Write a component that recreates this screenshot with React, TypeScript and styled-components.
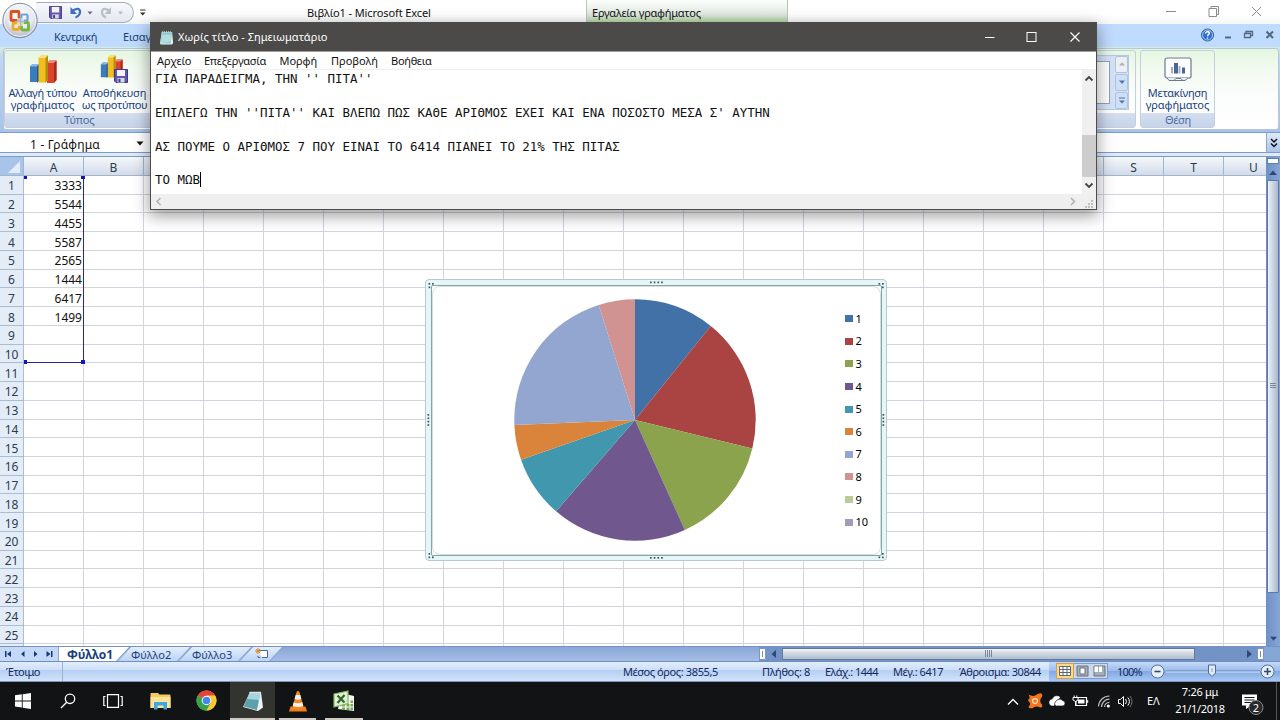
import React from 'react';
import styled, { createGlobalStyle } from 'styled-components';

const Global = createGlobalStyle`
  * { box-sizing: border-box; }
  body { margin: 0; overflow: hidden; }
`;

const ui = '"Noto Sans", "Open Sans", sans-serif';
const navy = '#1b3f7d';

const Desktop = styled.div`
  position: relative;
  width: 1280px;
  height: 720px;
  display: flex;
  flex-direction: column;
  overflow: hidden;
  background: #fff;
  font: 11px/14px ${ui};
  color: #111;
  white-space: nowrap;
`;
const Label = styled.span<{ $ls?: number }>`
  letter-spacing: ${(p) => p.$ls ?? 0}px;
`;

/* ---------- Excel title bar ---------- */
const TitleBar = styled.header`
  display: flex;
  height: 24px;
  background: linear-gradient(#fff 60%, #f6f7f8);
`;
const QuickAccess = styled.div`
  width: 98px;
  height: 21px;
  margin: 2px 0 0 36px;
  padding-left: 12px;
  display: flex;
  align-items: center;
  border: 1px solid #a5acbb;
  border-left-color: transparent;
  border-radius: 0 11px 11px 0;
  background: linear-gradient(#f6f8fb, #e4e8f0);
`;
const MoreCommands = styled.div`
  width: 173px;
  padding: 6px 0 0 6px;
`;
const DocTitle = styled.div`
  width: 279px;
  padding-top: 6px;
`;
const ContextTitle = styled.div`
  width: 202px;
  padding: 6px 0 0 5px;
  border: solid #b9c5bb;
  border-width: 0 1px;
  background: linear-gradient(#fdfefd, #dfe8e0 60%, #a9d293);
`;
const WindowButtons = styled.div`
  margin-left: auto;
  width: 118px;
  padding: 5px 0 0 4px;
`;

/* ---------- Ribbon ---------- */
const TabStrip = styled.nav`
  display: flex;
  height: 23px;
  padding: 6px 5px 0 54px;
  background: #bfdbff;
  color: ${navy};
`;
const RibbonTab = styled.span<{ $ls?: number }>`
  width: 69px;
  letter-spacing: ${(p) => p.$ls ?? 0}px;
`;
const TabTools = styled.div`
  margin: -2px 0 0 auto;
`;
const Ribbon = styled.section`
  display: flex;
  height: 86px;
  padding: 1px 1px 2px 3px;
  background: linear-gradient(#d8edda, #bfd6f6 12%, #a9c3e8);
`;
const RibbonInner = styled.div`
  flex: 1;
  display: flex;
  justify-content: space-between;
  padding: 0 63px 0 0;
  border: 1px solid #b4c8d8;
  border-radius: 3px;
  background: linear-gradient(#e4f6df, #f2faf0 25%, #fbfdfc 60%, #fff);
`;
const Group = styled.div<{ $w: number }>`
  width: ${(p) => p.$w}px;
  margin: 1px 0 1px;
  display: flex;
  flex-direction: column;
  border: 1px solid #c3cfdd;
  border-radius: 3px;
  overflow: hidden;
`;
const RightGroups = styled.div`
  display: flex;
  gap: 4px;
`;
const GroupBody = styled.div`
  flex: 1;
  display: flex;
  justify-content: flex-start;
`;
const GroupName = styled.div<{ $pad?: number }>`
  height: 14px;
  line-height: 14px;
  padding-left: ${(p) => p.$pad ?? 0}px;
  background: linear-gradient(#d5dff0, #c6d3ea);
  color: #4a6a9f;
`;
const BigButton = styled.button<{ $w: number }>`
  width: ${(p) => p.$w}px;
  padding: 4px 0 0;
  border: 0;
  background: none;
  display: flex;
  flex-direction: column;
  align-items: center;
  font: 11px/12.4px ${ui};
  color: ${navy};
  white-space: nowrap;
`;
const BigIcon = styled.span<{ $dx?: number }>`
  height: 32px;
  display: block;
  margin-right: ${(p) => p.$dx ?? 0}px;
`;
const Gallery = styled.div`
  flex: 1;
  margin: 4px 6px 3px 0;
  display: flex;
  justify-content: flex-end;
  background: #d3e2f5;
  border: 1px solid #b5c8e2;
`;
const GalleryThumb = styled.div`
  flex: 1;
  margin: 5px 5px 5px 0;
  background: #fff;
  border: 1px solid #8fa2bc;
`;
const GalleryArrows = styled.div`
  width: 13px;
  display: flex;
  flex-direction: column;
  gap: 1px;
`;
const GalleryArrow = styled.span<{ $dim?: boolean }>`
  flex: 1;
  display: flex;
  align-items: center;
  justify-content: center;
  border: 1px solid #adc4e2;
  border-radius: 2px;
  background: ${(p) => (p.$dim ? '#eceff4' : '#cfe0f6')};
`;

/* ---------- Formula bar ---------- */
const FormulaBar = styled.div`
  display: flex;
  height: 21px;
  border: solid #7d9cc6;
  border-width: 1px 0;
  background: #fff;
`;
const NameBox = styled.div`
  flex: 1;
  display: flex;
  padding: 4px 0 0 30px;
`;
const NameText = styled.span`
  width: 105px;
  font-size: 12px;
  line-height: 15px;
  letter-spacing: 0.2px;
`;
const Expand = styled.div`
  width: 14px;
  display: flex;
  align-items: center;
  justify-content: center;
  border-left: 1px solid #8ba7d0;
  background: linear-gradient(#dfeafa, #a9c4ea);
`;
const BarGap = styled.div`
  height: 4px;
  background: #dfeaf8;
  border-bottom: 1px solid #7f9bc2;
`;

/* ---------- Sheet ---------- */
const SheetArea = styled.main`
  position: relative;
  height: 489px;
  display: flex;
`;
const Grid = styled.div`
  width: 1266px;
  overflow: hidden;
`;
const GridRow = styled.div<{ $head?: boolean }>`
  display: flex;
  height: ${(p) => (p.$head ? 19 : 18.74)}px;
  width: 1284px;
`;
const Corner = styled.div`
  width: 24px;
  border: solid #9eb6ce;
  border-width: 0 1px 1px 0;
  background: #a9c4e9;
  display: flex;
  align-items: flex-end;
  justify-content: flex-end;
  padding: 2px;
`;
const ColHead = styled.div`
  width: 60px;
  padding-top: 4px;
  text-align: center;
  font-size: 12px;
  color: #2b3c50;
  border: solid #9eb6ce;
  border-width: 0 1px 1px 0;
  background: linear-gradient(#f5f8fb, #e4eaf3 50%, #d3dbe9);
`;
const RowHead = styled.div`
  width: 24px;
  padding-top: 3.4px;
  text-align: center;
  font-size: 12px;
  color: #2b3c50;
  border: solid #a9bdd3;
  border-width: 0 1px 1px 0;
  background: #e4ecf7;
`;
const Cell = styled.div`
  width: 60px;
  padding: 3.4px 1px 0 0;
  text-align: right;
  font-size: 12px;
  border: solid #d0d5df;
  border-width: 0 1px 1px 0;
`;
const RangeBox = styled.div`
  position: absolute;
  left: 25px;
  top: 20px;
  width: 59px;
  height: 186px;
  border: solid #2a23a4;
  border-width: 0 1px 1px 0;
`;
const Handle = styled.i<{ $r?: boolean; $b?: boolean }>`
  position: absolute;
  width: ${(p) => (p.$r ? 4 : 3)}px;
  height: ${(p) => (p.$b ? 4 : 3)}px;
  background: #1313c4;
  ${(p) => (p.$r ? 'right: -2px;' : 'left: -1px;')}
  ${(p) => (p.$b ? 'bottom: -2px;' : 'top: -1px;')}
`;
const VScroll = styled.div`
  width: 14px;
  display: flex;
  flex-direction: column;
  align-items: center;
  background: linear-gradient(90deg, #6d90c4, #86a6d6);
`;
const VSplit = styled.div`
  width: 12px;
  height: 6px;
  margin-top: 1px;
  border: 1px solid #5f7fae;
  background: #fff;
`;
const VThumb = styled.div`
  width: 12px;
  height: 413px;
  display: flex;
  align-items: center;
  justify-content: center;
  border: 1px solid #5f7aa6;
  border-radius: 1px;
  background: linear-gradient(90deg, #eef2f8, #cdd6e3 45%, #aab8cd);
`;
const ArrowBox = styled.div<{ $h: number }>`
  height: ${(p) => p.$h}px;
  display: flex;
  align-items: flex-end;
  padding-bottom: 3px;
`;

/* ---------- Chart ---------- */
const ChartFrame = styled.div`
  position: absolute;
  left: 425px;
  top: 122px;
  width: 462px;
  height: 282px;
  padding: 5px;
  border: 1px solid #b3cbd1;
  border-radius: 4px;
  background: #e6f6f8;
`;
const ChartArea = styled.div`
  width: 451px;
  height: 271px;
  display: flex;
  border: 1px solid #86a5a8;
  background: #fff;
  border-radius: 2px;
`;
const ChartInner = styled.div`
  flex: 1;
  display: flex;
  padding: 12px 0 0 81.3px;
  border: 1px solid #d4dede;
  border-radius: 8px;
`;
const Legend = styled.ul`
  margin: 8.5px 0 0 88.7px;
  padding: 0;
  list-style: none;
`;
const LegendItem = styled.li<{ $c: string }>`
  display: flex;
  align-items: center;
  gap: 2.5px;
  height: 22.6px;
  color: #000;
  &::before {
    content: '';
    width: 8px;
    height: 7px;
    background: ${(p) => p.$c};
  }
`;
const GripLayer = styled.svg`
  position: absolute;
  left: 0;
  top: 0;
`;

/* ---------- Sheet tabs ---------- */
const SheetBar = styled.div`
  display: flex;
  height: 16px;
  border-top: 1px solid #7692c4;
  border-bottom: 1px solid #6f8fc4;
  background: linear-gradient(#8aa7d6, #a5bee6);
`;
const NavButtons = styled.div`
  width: 59px;
  height: 14px;
  display: flex;
  align-items: center;
  padding-left: 4px;
  background: #c3d9f7;
  border-right: 1px solid #8aa5d0;
`;
const TabOuter = styled.div<{ $w: number; $on?: boolean }>`
  width: ${(p) => p.$w}px;
  margin-left: ${(p) => (p.$on ? 0 : -12)}px;
  display: flex;
  background: #7f9fd0;
  clip-path: ${(p) =>
    p.$on
      ? 'polygon(0 0, 100% 0, calc(100% - 13px) 100%, 0 100%)'
      : 'polygon(13px 0, 100% 0, calc(100% - 13px) 100%, 0 100%)'};
`;
const TabInner = styled.div<{ $pad: number; $on?: boolean }>`
  flex: 1;
  padding-left: ${(p) => p.$pad}px;
  font-size: ${(p) => (p.$on ? 12 : 11)}px;
  font-weight: ${(p) => (p.$on ? 700 : 400)};
  letter-spacing: ${(p) => (p.$on ? 0 : 0.1)}px;
  line-height: 15px;
  color: ${navy};
  background: ${(p) => (p.$on ? '#fff' : 'linear-gradient(#e3eefc, #bdd4f5)')};
  clip-path: ${(p) =>
    p.$on
      ? 'polygon(0 0, calc(100% - 1px) 0, calc(100% - 14px) 100%, 0 100%)'
      : 'polygon(13px 0, calc(100% - 1px) 0, calc(100% - 14px) 100%, 0 100%)'};
`;
const HScroll = styled.div`
  margin-left: auto;
  width: 505px;
  display: flex;
  align-items: center;
  background: #7393c6;
`;
const HSplit = styled.div`
  width: 7px;
  height: 12px;
  border: 1px solid #7a97c6;
  background: #fff;
  display: flex;
  justify-content: center;
  &::before {
    content: '';
    width: 1px;
    margin: 2px 0;
    background: #7a8cab;
  }
`;
const HArrow = styled.div<{ $w: number }>`
  width: ${(p) => p.$w}px;
  display: flex;
  align-items: center;
  justify-content: center;
`;
const HThumb = styled.div`
  width: 413px;
  height: 12px;
  display: flex;
  align-items: center;
  justify-content: center;
  border: 1px solid #6078a2;
  background: linear-gradient(#f3f6f9, #ccd5df 50%, #b0bdcd);
`;
const ScrollCorner = styled.div`
  width: 16px;
  background: #86a6d6;
`;

/* ---------- Status bar ---------- */
const StatusBar = styled.footer`
  display: flex;
  height: 20px;
  border-bottom: 1px solid #7e96bd;
  background: linear-gradient(#e2edfd, #cddff9 40%, #b5cff5 45%, #d3e3fa);
  color: #15285a;
  line-height: 19px;
`;
const Ready = styled.div`
  width: 63px;
  padding-left: 6px;
  letter-spacing: -0.5px;
  border-right: 1px solid #9ab2d8;
`;
const Stats = styled.div`
  display: flex;
  width: 986px;
  padding-left: 560px;
`;
const Stat = styled.span<{ $w: number; $ls: number }>`
  width: ${(p) => p.$w}px;
  letter-spacing: ${(p) => p.$ls}px;
`;
const ViewZone = styled.div`
  flex: 1;
  display: flex;
  align-items: center;
  padding-left: 7px;
  background: linear-gradient(#c4daf9, #9dbdec 45%, #82a9e2 50%, #a8c8f4);
`;
const ZoomText = styled.span`
  width: 34px;
  margin-left: 9px;
  letter-spacing: -0.8px;
`;

/* ---------- Taskbar ---------- */
const Taskbar = styled.div`
  display: flex;
  height: 38px;
  background: #121314;
`;
const Task = styled.div<{ $w: number; $gap?: number; $on?: boolean; $run?: boolean }>`
  width: ${(p) => p.$w}px;
  margin-left: ${(p) => p.$gap ?? 0}px;
  height: 38px;
  display: flex;
  align-items: center;
  justify-content: center;
  background: ${(p) => (p.$on ? '#32342f' : 'none')};
  box-shadow: inset 0 -2px ${(p) => (p.$on || p.$run ? '#d0c8c3' : 'transparent')};
`;
const Tray = styled.div`
  margin-left: auto;
  width: 280px;
  display: flex;
  align-items: center;
  color: #fff;
`;
const Language = styled.span`
  width: 27px;
  padding-left: 2px;
`;
const Clock = styled.div`
  width: 58px;
  padding-right: 2px;
  text-align: center;
  line-height: 16.5px;
  letter-spacing: -0.3px;
`;

/* ---------- Office button ---------- */
const OfficeOrb = styled.svg`
  position: absolute;
  left: 1px;
  top: 1px;
`;

/* ---------- Notepad ---------- */
const Notepad = styled.section`
  position: absolute;
  left: 150px;
  top: 22px;
  width: 947px;
  height: 188px;
  display: flex;
  flex-direction: column;
  border: 1px solid #4c4c4c;
  background: #fff;
  box-shadow: 0 5px 15px 1px rgba(0, 0, 0, 0.38);
`;
const NoteTitle = styled.div`
  display: flex;
  height: 29px;
  align-items: center;
  padding: 0 0 0 8px;
  background: #4b4a48;
  border-bottom: 1px solid #a09f9e;
  color: #fff;
`;
const NoteName = styled.span`
  margin-left: 4px;
  letter-spacing: 0.04px;
`;
const NoteControls = styled.div`
  margin-left: auto;
  width: 115px;
  height: 14px;
`;
const NoteMenu = styled.div`
  display: flex;
  height: 18px;
  padding: 2px 0 0 6px;
  border-bottom: 1px solid #efefef;
`;
const MenuItem = styled.span<{ $w: number; $ls: number }>`
  width: ${(p) => p.$w}px;
  letter-spacing: ${(p) => p.$ls}px;
`;
const NoteMain = styled.div`
  display: flex;
  height: 124px;
`;
const NoteText = styled.pre`
  flex: 1;
  margin: 0;
  padding: 1px 0 0 4px;
  overflow: hidden;
  font: 12.46px/16.9px 'DejaVu Sans Mono', monospace;
  color: #111;
`;
const Caret = styled.span`
  border-left: 1px solid #000;
`;
const NoteVScroll = styled.div`
  width: 14px;
  background: #f0f0f0;
  display: flex;
  flex-direction: column;
  align-items: center;
`;
const NoteVThumb = styled.div`
  width: 14px;
  height: 42px;
  margin-top: 47px;
  background: #cdcdcd;
`;
const NoteHScroll = styled.div`
  flex: 1;
  display: flex;
  align-items: center;
  justify-content: space-between;
  padding: 0 2px 0 4px;
  background: #efefef;
`;

/* Column letters; the ones behind the Notepad window stay blank. */
const columns = Array.from({ length: 21 }, (_, i) => (i > 1 && i < 18 ? '' : String.fromCharCode(65 + i)));
const values = [3333, 5544, 4455, 5587, 2565, 1444, 6417, 1499];
const colors = ['#4271a7', '#a94442', '#8aa34c', '#70578d', '#4097ae', '#da843b', '#93a6d0', '#d09392', '#b9cb96', '#a59ab8'];
const note = `ΓΙΑ ΠΑΡΑΔΕΙΓΜΑ, ΤΗΝ '' ΠΙΤΑ''

ΕΠΙΛΕΓΩ ΤΗΝ ''ΠΙΤΑ'' ΚΑΙ ΒΛΕΠΩ ΠΩΣ ΚΑΘΕ ΑΡΙΘΜΟΣ ΕΧΕΙ ΚΑΙ ΕΝΑ ΠΟΣΟΣΤΟ ΜΕΣΑ Σ' ΑΥΤΗΝ

ΑΣ ΠΟΥΜΕ Ο ΑΡΙΘΜΟΣ 7 ΠΟΥ ΕΙΝΑΙ ΤΟ 6414 ΠΙΑΝΕΙ ΤΟ 21% ΤΗΣ ΠΙΤΑΣ

ΤΟ ΜΩΒ`;

function Triangle({ dir, color = '#2d4778', w = 7 }: { dir: 'up' | 'down' | 'left' | 'right'; color?: string; w?: number }) {
  const rot = { up: 180, down: 0, left: 90, right: 270 }[dir];
  return (
    <svg width={w} height={w} viewBox="0 0 8 8">
      <path d="M0 2H8L4 6.5Z" fill={color} transform={`rotate(${rot} 4 4)`} />
    </svg>
  );
}

function Pie() {
  const total = values.reduce((a, b) => a + b, 0);
  let sum = 0;
  const point = (v: number) => {
    const a = (v / total) * Math.PI * 2;
    return `${121 + 120.7 * Math.sin(a)} ${121 - 120.7 * Math.cos(a)}`;
  };
  return (
    <svg width="242" height="242" viewBox="0 0 242 242">
      {values.map((v, i) => {
        const from = point(sum);
        sum += v;
        return <path key={i} d={`M121 121L${from}A120.7 120.7 0 0 1 ${point(sum)}Z`} fill={colors[i]} />;
      })}
    </svg>
  );
}

function Grips() {
  const dots: [number, number][] = [];
  for (let i = 0; i < 4; i++) {
    dots.push([224 + i * 3.7, 1.5], [224 + i * 3.7, 277], [1.5, 134 + i * 3.4], [456.5, 134 + i * 3.4]);
  }
  [2.5, 452.5].forEach((x, xi) =>
    [3, 273].forEach((y, yi) => {
      const corner: [number, number][] = [[x, y], [x + 3.5, y], [x, y + 3.5], [x + 3.5, y + 3.5]];
      const inner = (1 - yi) * 2 + (1 - xi);
      dots.push(...corner.filter((_, i) => i !== inner));
    }),
  );
  return (
    <GripLayer width="460" height="280">
      {dots.map(([x, y], i) => (
        <rect key={i} x={x} y={y} width="1.7" height="1.7" fill="#40595f" />
      ))}
    </GripLayer>
  );
}

function Bars({ size }: { size: number }) {
  return (
    <svg width={size} height={size} viewBox="0 0 28 28">
      <path d="M1 11.5L3.5 9H9V27H1Z" fill="#3b7cba" />
      <path d="M1 11.5L3.5 9H10L8 11.5Z" fill="#8dbbe4" />
      <path d="M8 11.5L10 9V26L8 28Z" fill="#245a92" />
      <path d="M18 8L20.500 5.500H27.500V25L24.500 28H18Z" fill="#d8442e" />
      <path d="M18 8L20.500 5.500H27.500L25 8Z" fill="#f08c74" />
      <path d="M25 8L27.500 5.500V25L25 28Z" fill="#a92a1c" />
      <path d="M9.500 3L12 .5H19V25L17 27.500H9.500Z" fill="#f0bf22" />
      <path d="M9.500 3L12 .5H19L16.500 3Z" fill="#fbe27c" />
      <path d="M16.500 3L19 .5V25L16.500 27.500Z" fill="#b98a10" />
    </svg>
  );
}

function Floppy({ size }: { size: number }) {
  return (
    <svg width={size} height={size} viewBox="0 0 14 14">
      <path d="M.5 .5H13.500V13.500H2L.5 12Z" fill="#6356ab" stroke="#40378a" />
      <rect x="3" y="1" width="8" height="6" fill="#f3f3fb" />
      <rect x="3.500" y="9" width="7" height="4.500" fill="#d9d9ea" />
      <rect x="4.500" y="9.800" width="2" height="3.200" fill="#40378a" />
    </svg>
  );
}

function SaveTemplateIcon() {
  return (
    <svg width="30" height="30" viewBox="0 0 30 30">
      <g transform="translate(1 0)"><Bars size={23} /></g>
      <g transform="translate(15 14)"><Floppy size={14} /></g>
    </svg>
  );
}

function NoteIcon({ size }: { size: number }) {
  return (
    <svg width={size} height={size} viewBox="0 0 16 16">
      <path d="M3 2H14L15 14L13.500 15.500H2L1 14.500Z" fill="#e9f6f6" />
      <path d="M3 2H14L12.500 14.500H1.500Z" fill="#8ecbd2" />
      <path d="M3.500 5H13L12.300 12L1.800 14.500Z" fill="#c2e6e6" opacity=".7" />
      <path d="M4 1V3M6 1V3M8 1V3M10 1V3M12 1V3" stroke="#cfe4e6" strokeWidth=".8" />
    </svg>
  );
}

function OfficeButton() {
  return (
    <OfficeOrb width="38" height="38" viewBox="0 0 38 38">
      <defs>
        <radialGradient id="orb" cx="50%" cy="35%" r="65%">
          <stop offset="0" stopColor="#fff" />
          <stop offset=".6" stopColor="#e6e9f0" />
          <stop offset="1" stopColor="#aab1c0" />
        </radialGradient>
      </defs>
      <circle cx="19" cy="19.500" r="17.200" fill="url(#orb)" stroke="#848c9c" />
      <circle cx="19" cy="19.500" r="15.800" fill="none" stroke="#fff" opacity=".8" />
      <g fill="none" strokeWidth="2.800">
        <rect x="10" y="10.500" width="8" height="9" rx="1" stroke="#d9531e" />
        <rect x="20.500" y="13.500" width="6" height="6" rx="1" stroke="#6ea3dc" strokeWidth="2.200" />
        <rect x="12" y="22" width="6" height="6.500" rx="1" stroke="#f0a92a" />
        <rect x="20.500" y="21.500" width="7" height="7.500" rx="1" stroke="#7cb342" />
      </g>
      <path d="M16 17H23V25H16Z" fill="#fff" opacity=".55" />
      <path d="M19.500 15V26M14 20.500H25" stroke="#9bb7d8" strokeWidth="1" />
    </OfficeOrb>
  );
}

function TrayIcons() {
  return (
    <svg width="145" height="38" viewBox="1000 0 145 38" fill="none" stroke="#fff">
      <path d="M1008 22.500L1013 17.500L1018 22.500" strokeWidth="1.300" />
      <path d="M1028.500 12.500Q1033 15 1036 13Q1040 10 1042 12Q1043 14 1040.500 17Q1039.500 20 1042 22.500Q1043 26 1040 25.500Q1036 23.500 1033 26Q1028.500 27 1028.500 25Q1031 22 1029.500 20.500Q1027 18 1029 17Q1030.500 16 1028.500 12.500Z" fill="#f4761c" stroke="none" />
      <circle cx="1035" cy="19" r="2.400" stroke="#ffe3cb" strokeWidth="1.100" />
      <path d="M1054 23.500H1052.500A3 3 0 0 1 1052.500 17.500A4.500 4.500 0 0 1 1060 15.500" fill="#fff" strokeWidth=".6" />
      <path d="M1056 24A2.500 2.500 0 0 1 1056 19.500A3.800 3.800 0 0 1 1062.500 18.500A2.800 2.800 0 0 1 1063 24Z" fill="#fff" stroke="#121314" strokeWidth=".7" />
      <path d="M1076 15.500H1086.500V23.500H1076Z" strokeWidth="1.200" />
      <path d="M1078 17.500H1084.500V21.500H1078Z" fill="#fff" stroke="none" />
      <path d="M1087.700 18V21" />
      <path d="M1073 15.500H1078V18L1075.500 19.500L1073 18ZM1074.200 13.500V15.500M1076.800 13.500V15.500M1075.500 19.500V24" fill="#121314" />
      <path d="M1098.500 24.500A11 11 0 0 1 1109.500 14M1101.500 25A8 8 0 0 1 1109.500 17.200M1104.500 25A5 5 0 0 1 1109.500 20.300" stroke="#bbb" strokeWidth="1.200" />
      <circle cx="1108.300" cy="24" r="1.600" fill="#fff" stroke="none" />
      <path d="M1118.500 17.500H1120.500L1123.500 14.500V24.500L1120.500 21.500H1118.500Z" />
      <path d="M1125.500 17Q1127.500 19.500 1125.500 22M1127.800 15.500Q1131 19.500 1127.800 23.500" />
      <path d="M1130 14Q1134 19.500 1130 25" stroke="#777" />
    </svg>
  );
}

function ExcelWindow() {
  return (
    <>
      <TitleBar>
        <QuickAccess>
          <Floppy size={13} />
          <svg width="68" height="16" viewBox="0 0 68 16" fill="none">
            <path d="M11 5.500Q17 2 18 6Q18.500 10.500 13.500 12.500" stroke="#3b6fc0" strokeWidth="2.300" />
            <path d="M8.500 2V9H15Z" fill="#3b6fc0" />
            <path d="M25.500 6.500H30.500L28 9.500Z" fill="#5d6c88" />
            <path d="M47.500 5.500Q41 2 40 6Q39.500 10.500 44 12.500" stroke="#b9bfca" strokeWidth="2.200" />
            <path d="M49 2V9H42.500Z" fill="#b9bfca" />
            <path d="M56 6.500H61L58.500 9.500Z" fill="#b4bac6" />
          </svg>
        </QuickAccess>
        <MoreCommands>
          <svg width="6" height="8"><path d="M0 1H5.500" stroke="#333" /><path d="M0 3.500H5.500L2.700 6.500Z" fill="#333" /></svg>
        </MoreCommands>
        <DocTitle><Label $ls={-0.1}>Βιβλίο1 - Microsoft Excel</Label></DocTitle>
        <ContextTitle><Label $ls={-0.24}>Εργαλεία γραφήματος</Label></ContextTitle>
        <WindowButtons>
          <svg width="100" height="14" fill="none" stroke="#8a8a8a">
            <path d="M0 6.500H10" />
            <path d="M43 3.500H50.500V11.500H43ZM45 3.500V1.500H52.500V9.500H50.500" />
            <path d="M86 2L95 11M95 2L86 11" />
          </svg>
        </WindowButtons>
      </TitleBar>
      <TabStrip>
        <RibbonTab $ls={-0.36}>Κεντρική</RibbonTab>
        <RibbonTab $ls={-0.1}>Εισαγωγή</RibbonTab>
        <TabTools>
          <svg width="76" height="14" viewBox="0 0 76 14" fill="none">
            <circle cx="8.500" cy="7" r="6" fill="#2f6fd0" stroke="#3a5c97" />
            <circle cx="8.500" cy="7" r="5" stroke="#c4dbf8" strokeWidth=".8" />
            <path d="M6.500 5.500Q7 3.500 8.800 3.500Q10.700 4 10.300 5.600Q8.700 6.800 8.600 8.300M8.500 9.500V10.800" stroke="#fff" strokeWidth="1.400" />
            <path d="M26 9.500H32" stroke="#55667f" strokeWidth="2" />
            <path d="M45.500 5.500H51.500V9.500H45.500ZM47 5.500V3.500H53.500V7.500H51.500" stroke="#55667f" strokeWidth="1.300" />
            <path d="M67.500 3.500L74 10M74 3.500L67.500 10" stroke="#55667f" strokeWidth="2" />
          </svg>
        </TabTools>
      </TabStrip>
      <Ribbon>
        <RibbonInner>
          <Group $w={220}>
            <GroupBody>
              <BigButton $w={75}>
                <BigIcon><Bars size={28} /></BigIcon>
                <Label $ls={-0.36}>Αλλαγή τύπου</Label>
                <Label $ls={-0.1}>γραφήματος</Label>
              </BigButton>
              <BigButton $w={69}>
                <BigIcon $dx={2}><SaveTemplateIcon /></BigIcon>
                <Label $ls={-0.17}>Αποθήκευση</Label>
                <Label $ls={-0.37}>ως προτύπου</Label>
              </BigButton>
            </GroupBody>
            <GroupName $pad={59}><Label $ls={-0.1}>Τύπος</Label></GroupName>
          </Group>
          <RightGroups>
            <Group $w={80}>
              <GroupBody>
                <Gallery>
                  <GalleryThumb />
                  <GalleryArrows>
                    <GalleryArrow $dim><Triangle dir="up" w={6} color="#a9afba" /></GalleryArrow>
                    <GalleryArrow><Triangle dir="down" w={6} color="#4f74ae" /></GalleryArrow>
                    <GalleryArrow>
                      <svg width="6" height="7"><path d="M0 1H6" stroke="#4f74ae" /><path d="M0 3.500H6L3 6.500Z" fill="#4f74ae" /></svg>
                    </GalleryArrow>
                  </GalleryArrows>
                </Gallery>
              </GroupBody>
              <GroupName />
            </Group>
            <Group $w={75}>
              <GroupBody>
                <BigButton $w={73}>
                  <BigIcon>
                    <svg width="28" height="30" viewBox="0 0 28 30" fill="none">
                      <rect x="1" y="3" width="26" height="20" rx="2" fill="#fff" stroke="#6b7890" strokeWidth="1.200" />
                      <path d="M3 23L5 25.500H21L24 23M10 25.500L12 23.500H17L18.500 25.500" fill="#e8edf5" stroke="#6b7890" />
                      <path d="M8 12V18.500M15.500 11V18.500" stroke="#9fb1cc" strokeWidth="2" />
                      <path d="M12 8V18.500" stroke="#4b6794" strokeWidth="4" />
                      <path d="M19.500 12.500V18.500" stroke="#4b6794" strokeWidth="3" />
                    </svg>
                  </BigIcon>
                  <Label $ls={-0.3}>Μετακίνηση</Label>
                  <Label $ls={-0.1}>γραφήματος</Label>
                </BigButton>
              </GroupBody>
              <GroupName $pad={24}><Label $ls={-0.3}>Θέση</Label></GroupName>
            </Group>
          </RightGroups>
        </RibbonInner>
      </Ribbon>
      <FormulaBar>
        <NameBox>
          <NameText>1 - Γράφημα</NameText>
          <svg width="20" height="14"><path d="M1.500 4.500H8.500L5 8.500Z" fill="#111" /></svg>
        </NameBox>
        <Expand>
          <svg width="8" height="10" fill="none" stroke="#111" strokeWidth="1.500"><path d="M1 1L4 4L7 1M1 5.500L4 8.500L7 5.500" /></svg>
        </Expand>
      </FormulaBar>
      <BarGap />
      <SheetArea>
        <Grid>
          <GridRow $head>
            <Corner><svg width="13" height="12"><path d="M12 0V12H0Z" fill="#e3edfa" /></svg></Corner>
            {columns.map((c, i) => <ColHead key={i}>{c}</ColHead>)}
          </GridRow>
          {Array.from({ length: 26 }, (_, r) => (
            <GridRow key={r}>
              <RowHead>{r < 25 ? r + 1 : null}</RowHead>
              {columns.map((_c, i) => <Cell key={i}>{i === 0 ? values[r] : null}</Cell>)}
            </GridRow>
          ))}
        </Grid>
        <VScroll>
          <VSplit />
          <ArrowBox $h={16}><Triangle dir="up" w={8} /></ArrowBox>
          <VThumb>
            <svg width="6" height="6" stroke="#7a879b"><path d="M0 .5H6M0 2.500H6M0 4.500H6" /></svg>
          </VThumb>
          <ArrowBox $h={52}><Triangle dir="down" w={7} /></ArrowBox>
        </VScroll>
        <RangeBox><Handle /><Handle $r /><Handle $b /><Handle $r $b /></RangeBox>
        <ChartFrame>
          <ChartArea>
            <ChartInner>
              <Pie />
              <Legend>{colors.map((c, i) => <LegendItem key={c} $c={c}>{i + 1}</LegendItem>)}</Legend>
            </ChartInner>
          </ChartArea>
          <Grips />
        </ChartFrame>
      </SheetArea>
      <SheetBar>
        <NavButtons>
          <svg width="52" height="8" fill="#17397b">
            <path d="M1 1H2.500V7H1ZM7 1V7L3 4ZM20.500 1V7L17 4ZM30 1V7L33.500 4ZM42.500 1V7L46.500 4ZM47 1H48.500V7H47Z" />
          </svg>
        </NavButtons>
        <TabOuter $w={71} $on><TabInner $pad={8} $on>Φύλλο1</TabInner></TabOuter>
        <TabOuter $w={73}><TabInner $pad={13}>Φύλλο2</TabInner></TabOuter>
        <TabOuter $w={73}><TabInner $pad={13}>Φύλλο3</TabInner></TabOuter>
        <TabOuter $w={43}>
          <TabInner $pad={14}>
            <svg width="16" height="13" fill="none">
              <path d="M5 3.500H13.500V10.500H8" fill="#fff" stroke="#4d668f" />
              <path d="M4 1V7M1 4H7M2 2L6 6M6 2L2 6" stroke="#d98a22" />
              <path d="M3 8.500L7 11H4Z" fill="#4d668f" />
            </svg>
          </TabInner>
        </TabOuter>
        <HScroll>
          <HSplit />
          <HArrow $w={16}><Triangle dir="left" w={8} /></HArrow>
          <HThumb><svg width="7" height="7" stroke="#7a879b"><path d="M.5 0V7M2.500 0V7M4.500 0V7M6.500 0V7" /></svg></HThumb>
          <HArrow $w={62}><svg width="62" height="8"><path d="M52 0V8L57 4Z" fill="#2d4778" /></svg></HArrow>
          <HSplit />
        </HScroll>
        <ScrollCorner />
      </SheetBar>
      <StatusBar>
        <Ready>Έτοιμο</Ready>
        <Stats>
          <Stat $w={139} $ls={-0.39}>Μέσος όρος: 3855,5</Stat>
          <Stat $w={63} $ls={-0.35}>Πλήθος: 8</Stat>
          <Stat $w={68} $ls={-0.53}>Ελάχ.: 1444</Stat>
          <Stat $w={66} $ls={-0.42}>Μέγ.: 6417</Stat>
          <Stat $w={90} $ls={-0.45}>Άθροισμα: 30844</Stat>
        </Stats>
        <ViewZone>
          <svg width="52" height="16" viewBox="0 0 52 16" fill="none">
            <rect x=".5" y=".5" width="51" height="15" fill="#cbd9ec" stroke="#7e9cc8" />
            <rect x=".5" y=".5" width="17" height="15" fill="#fbd98a" stroke="#d3a047" />
            <path d="M3.500 3.500H14.500V12.500H3.500ZM7 3.500V12.500M11 3.500V12.500M3.500 6.500H14.500M3.500 9.500H14.500" fill="#fff" stroke="#5f6674" />
            <path d="M21 3H32V13H21Z" fill="#a5adb9" stroke="#6a7280" />
            <path d="M24 5H29V11H24Z" fill="#fff" stroke="#6a7280" />
            <path d="M38 3H49V13H38Z" fill="#a5adb9" stroke="#6a7280" />
            <path d="M38.500 3.500H42V9H38.500ZM43 3.500H46V9H43Z" fill="#fff" />
          </svg>
          <ZoomText>100%</ZoomText>
          <svg width="128" height="18" viewBox="1151 0 128 18" fill="none">
            <path d="M1166 9H1260" stroke="#5a7db5" />
            <path d="M1166 10H1260" stroke="#dbe8fb" />
            <circle cx="1157.500" cy="9.500" r="6.500" fill="#e6eefa" stroke="#55709f" />
            <path d="M1154.500 9.500H1160.500" stroke="#33496f" strokeWidth="1.600" />
            <path d="M1208.500 3H1215.500V11L1212 14.500L1208.500 11Z" fill="#e1eaf7" stroke="#4e6a9a" />
            <path d="M1212 6V10" stroke="#8da3c5" />
            <circle cx="1267.500" cy="9.500" r="6.500" fill="#e6eefa" stroke="#55709f" />
            <path d="M1264 9.500H1271M1267.500 6V13" stroke="#33496f" strokeWidth="1.600" />
          </svg>
        </ViewZone>
      </StatusBar>
      <OfficeButton />
    </>
  );
}

function NotepadWindow() {
  return (
    <Notepad>
      <NoteTitle>
        <NoteIcon size={15} />
        <NoteName>Χωρίς τίτλο - Σημειωματάριο</NoteName>
        <NoteControls>
          <svg width="115" height="14" fill="none" stroke="#fff">
            <path d="M4 7.500H13.500" />
            <rect x="46" y="2.500" width="9" height="9" />
            <path d="M89.500 2.500L98.500 11.500M98.500 2.500L89.500 11.500" strokeWidth="1.200" />
          </svg>
        </NoteControls>
      </NoteTitle>
      <NoteMenu>
        <MenuItem $w={47} $ls={-0.1}>Αρχείο</MenuItem>
        <MenuItem $w={75.5} $ls={-0.25}>Επεξεργασία</MenuItem>
        <MenuItem $w={51.5} $ls={-0.05}>Μορφή</MenuItem>
        <MenuItem $w={60} $ls={0}>Προβολή</MenuItem>
        <MenuItem $w={60} $ls={-0.27}>Βοήθεια</MenuItem>
      </NoteMenu>
      <NoteMain>
        <NoteText>{note}<Caret /></NoteText>
        <NoteVScroll>
          <svg width="10" height="18" fill="none" stroke="#444" strokeWidth="1.800"><path d="M1.500 10.500L5 7L8.500 10.500" /></svg>
          <NoteVThumb />
          <svg width="10" height="16" fill="none" stroke="#444" strokeWidth="1.800"><path d="M1.500 6.500L5 10L8.500 6.500" /></svg>
        </NoteVScroll>
      </NoteMain>
      <NoteHScroll>
        <svg width="8" height="10" fill="none" stroke="#b0b0b0" strokeWidth="1.500"><path d="M5.500 1L2 4.500L5.500 8" /></svg>
        <svg width="28" height="12" fill="none" stroke="#b0b0b0" strokeWidth="1.500">
          <path d="M5 2L8.500 5.500L5 9" />
          <path d="M19 11H21M22 11H24M25 11H27M22 8H24M25 8H27M25 5H27" />
        </svg>
      </NoteHScroll>
    </Notepad>
  );
}

function WindowsTaskbar() {
  return (
    <Taskbar>
      <Task $w={45}>
        <svg width="16" height="16" fill="#fff"><path d="M0 2.300L6.800 1.300V7.500H0ZM7.700 1.200L16 0V7.500H7.700ZM0 8.400H6.800V14.600L0 13.600ZM7.700 8.400H16V16L7.700 14.800Z" /></svg>
      </Task>
      <Task $w={45}>
        <svg width="16" height="16" fill="none" stroke="#fff" strokeWidth="1.300"><circle cx="10" cy="5.800" r="4.700" /><path d="M6.700 9.200L1 15" /></svg>
      </Task>
      <Task $w={45}>
        <svg width="20" height="14" fill="none" stroke="#fff" strokeWidth="1.200"><path d="M4.500 .7H15.500V13.300H4.500ZM2.500 2.500H.8V11.500H2.500M17.500 2.500H19.200V11.500H17.500" /></svg>
      </Task>
      <Task $w={45} $gap={3}>
        <svg width="21" height="18" fill="none">
          <path d="M.5 2Q.5 1 1.500 1H8L9.500 2.500H19.500Q20.500 2.500 20.500 3.500V16H.5Z" fill="#f3cb62" />
          <path d="M.5 5H20.500V16H.5Z" fill="#fbe39a" />
          <path d="M4 17.500V10H17V17.500H13.500V13.500H7.500V17.500Z" fill="#3fa7e0" />
        </svg>
      </Task>
      <Task $w={45} $gap={1}>
        <svg width="21" height="21" viewBox="0 0 22 22">
          <circle cx="11" cy="11" r="10.500" fill="#fbc934" />
          <path d="M11 11L1.900 5.750A10.500 10.500 0 0 0 11 21.500L15.500 13.600Z" fill="#33a350" />
          <path d="M11 11L1.900 5.750A10.500 10.500 0 0 1 20.100 5.750L11 6Z" fill="#e2423a" />
          <path d="M11 6H20.200A10.500 10.500 0 0 1 11 21.500L15.500 13.500Z" fill="#fbc934" />
          <circle cx="11" cy="11" r="5" fill="#fff" />
          <circle cx="11" cy="11" r="4" fill="#4485ee" />
        </svg>
      </Task>
      <Task $w={45} $gap={1} $on>
        <svg width="22" height="22" fill="none">
          <path d="M8 2H19L21 17.500L16 21L1 17Z" fill="#eef4f4" />
          <path d="M8 2H18.500L15 20L1.500 16.500Z" fill="#5da0ad" />
          <path d="M8 2H18.500L17 10L5 9Z" fill="#a5d4da" />
          <path d="M7.500 2.500H19" stroke="#d8e6e8" strokeWidth="1.500" />
        </svg>
      </Task>
      <Task $w={37} $gap={4} $run>
        <svg width="20" height="22">
          <path d="M2.500 16.500H17.500L19 21.500H1Z" fill="#f07f1a" />
          <path d="M8.700 1.500Q10 .5 11.300 1.500L15.800 18Q10 20.500 4.200 18Z" fill="#f28a22" />
          <path d="M7.700 5H12.300L13.400 9Q10 10.500 6.600 9Z" fill="#f1f1f1" />
          <path d="M5.700 12.300Q10 14 14.300 12.300L15.300 16Q10 18 4.700 16Z" fill="#f1f1f1" />
        </svg>
      </Task>
      <Task $w={38} $gap={9} $run>
        <svg width="22" height="22" fill="none">
          <path d="M8 3L21 6V21L5 19Z" fill="#f4f8ef" />
          <path d="M9 14H12V16.500H9ZM13.500 14H16.500V16.500H13.500ZM17.500 14H20V16.500H17.500ZM9 17.500H12V20H9ZM13.500 17.500H16.500V20H13.500ZM17.500 10.500H20V13H17.500ZM17.500 17.500H20V20H17.500Z" fill="#76a856" />
          <path d="M1 4L15 1V13.500L1 17Z" fill="#e3f0d8" stroke="#86b35f" strokeWidth="1.200" />
          <path d="M4.500 5.500L11.500 12.500M11.500 5L4.500 13" stroke="#2d6b2a" strokeWidth="2.300" />
        </svg>
      </Task>
      <Tray>
        <TrayIcons />
        <Language>ΕΛ</Language>
        <Clock>7:26 μμ<br />21/1/2018</Clock>
        <svg width="50" height="38" viewBox="1230 0 50 38" fill="none">
          <path d="M1242 12.500H1257V23.500H1251L1246 27V23.500H1242Z" fill="#fff" />
          <path d="M1244.500 15.500H1254.500M1244.500 18H1254.500M1244.500 20.500H1251" stroke="#121314" />
          <circle cx="1256" cy="25.500" r="7" fill="#29292b" stroke="#8a8a8a" />
          <text x="1256" y="29.500" fill="#fff" textAnchor="middle" fontSize="11" fontFamily="Noto Sans">2</text>
          <path d="M1276.500 0V38" stroke="#555" />
        </svg>
      </Tray>
    </Taskbar>
  );
}

export default function App() {
  return (
    <Desktop>
      <Global />
      <ExcelWindow />
      <WindowsTaskbar />
      <NotepadWindow />
    </Desktop>
  );
}
